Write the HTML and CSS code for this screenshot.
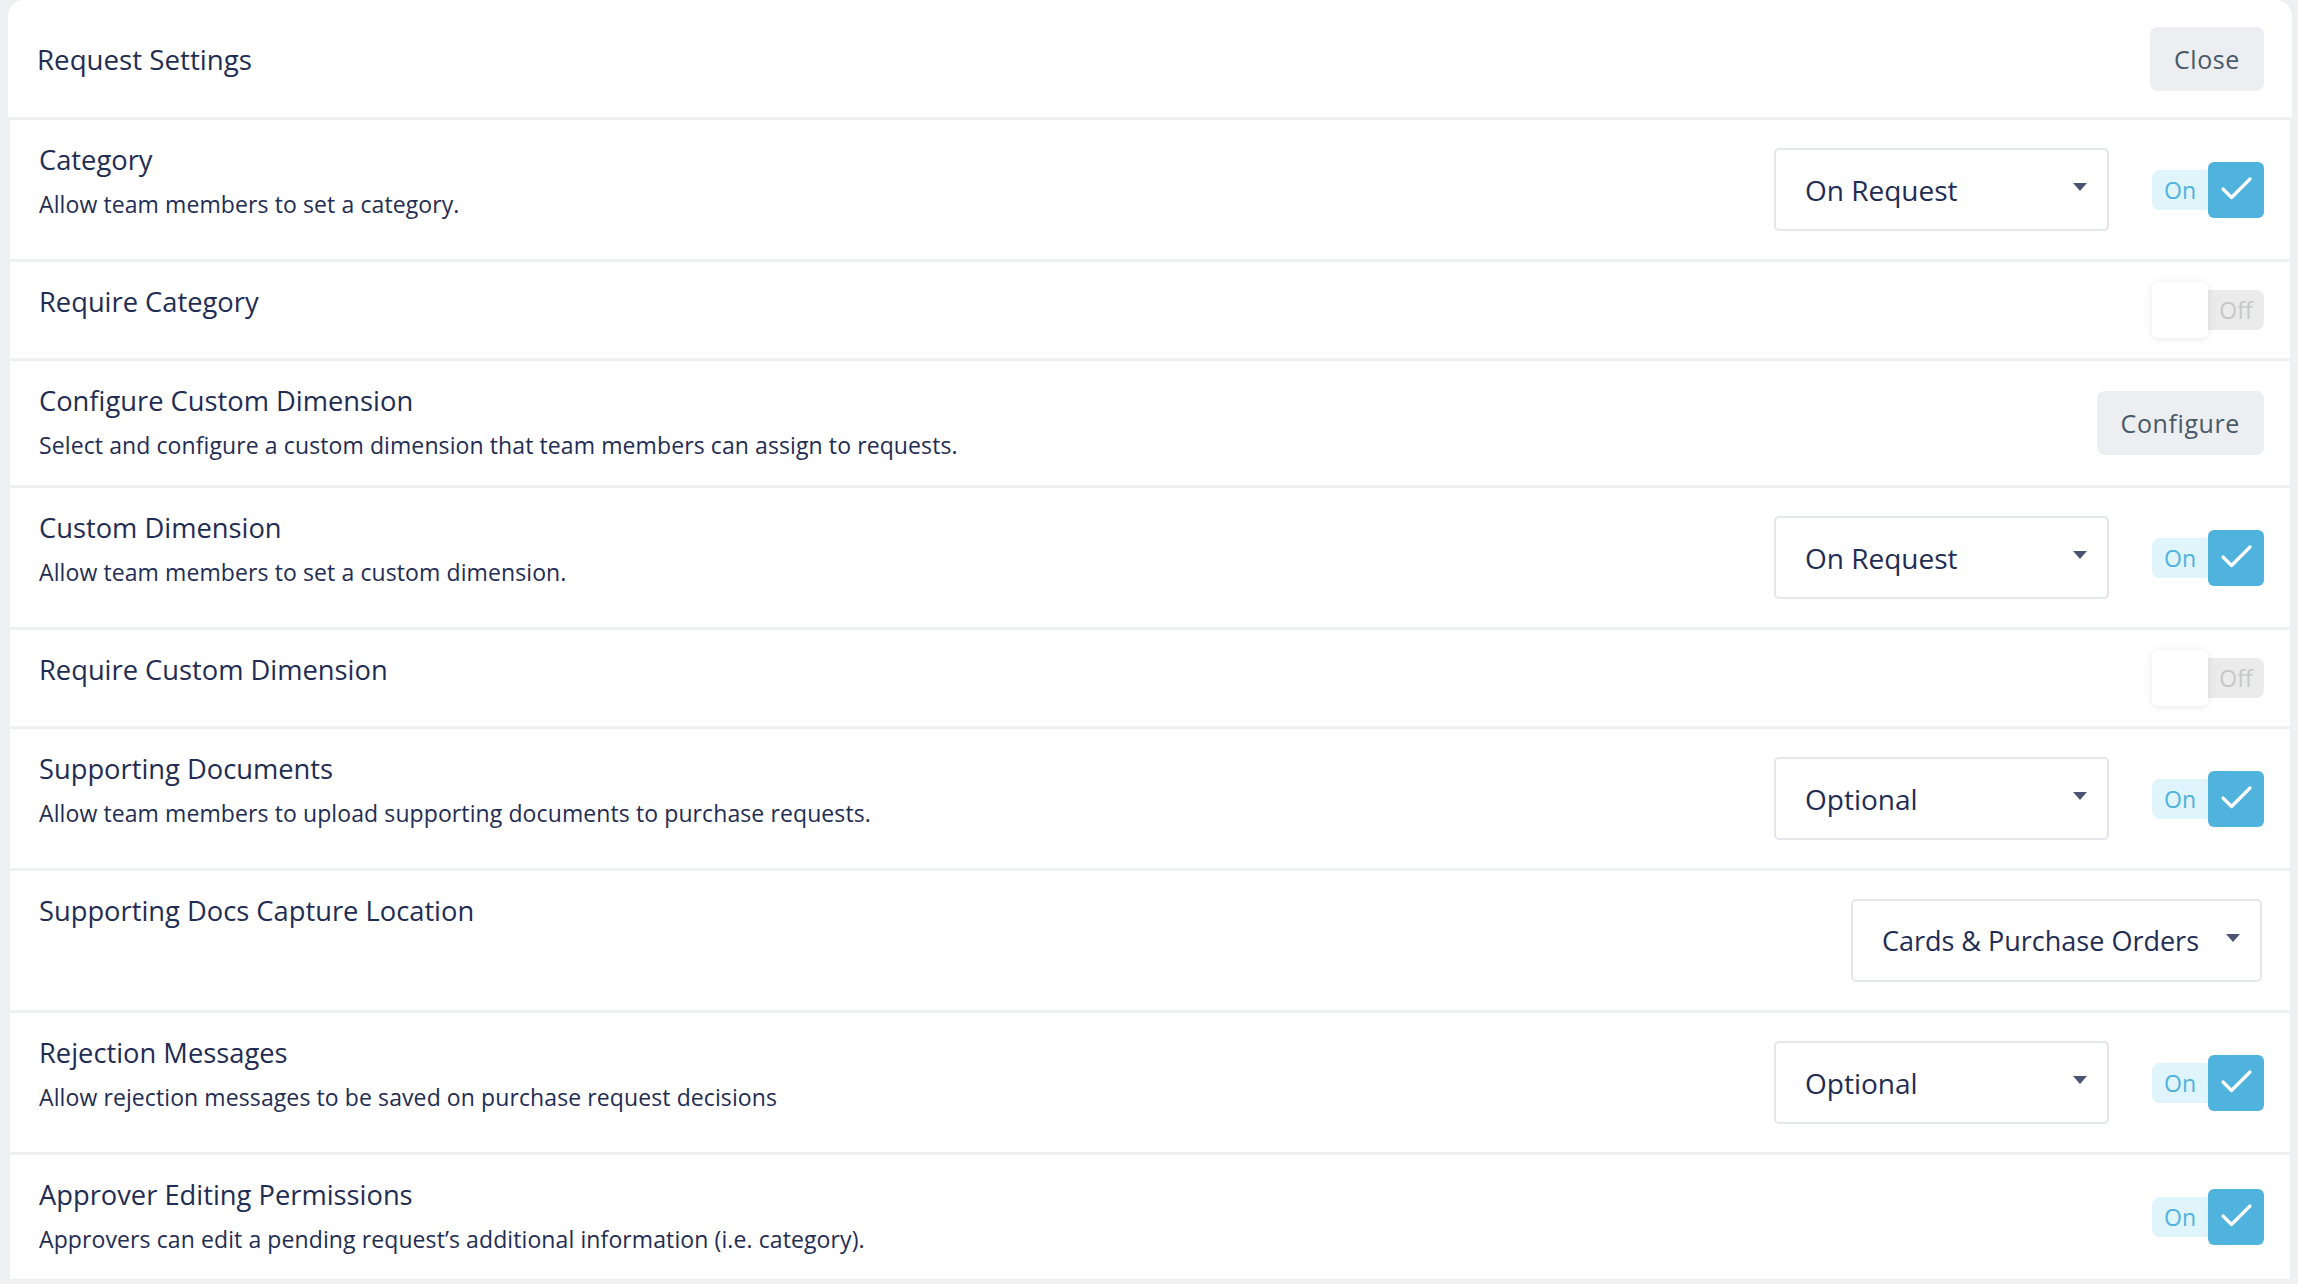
FILE: index.html
```html
<!DOCTYPE html>
<html lang="en">
<head>
    <meta charset="UTF-8">
    <meta name="viewport" content="width=device-width, initial-scale=1.0">
    <title>Request Settings</title>
    <link rel="stylesheet" href="styles.css">
</head>
<body>

    <div class="panel">
        <header class="panel-header">
            <h1>Request Settings</h1>
            <button class="btn">Close</button>
        </header>

        <div class="settings">
            <div class="row">
                <div class="row-text">
                    <div class="row-title">Category</div>
                    <div class="row-desc">Allow team members to set a category.</div>
                </div>
                <div class="row-controls">
                    <div class="select"><span>On Request</span><span class="select-arrow"></span></div>
                    <div class="toggle on">
                        <div class="toggle-track"><span class="toggle-label">On</span></div>
                        <span class="toggle-knob">
                            <svg width="56" height="56" viewBox="0 0 56 56"><polyline points="15,27 23.5,35.5 42,17" /></svg>
                        </span>
                    </div>
                </div>
            </div>

            <div class="row">
                <div class="row-text">
                    <div class="row-title">Require Category</div>
                </div>
                <div class="row-controls">
                    <div class="toggle off">
                        <div class="toggle-track"><span class="toggle-label">Off</span></div>
                        <span class="toggle-knob"></span>
                    </div>
                </div>
            </div>

            <div class="row">
                <div class="row-text">
                    <div class="row-title">Configure Custom Dimension</div>
                    <div class="row-desc">Select and configure a custom dimension that team members can assign to requests.</div>
                </div>
                <div class="row-controls">
                    <button class="btn">Configure</button>
                </div>
            </div>

            <div class="row">
                <div class="row-text">
                    <div class="row-title">Custom Dimension</div>
                    <div class="row-desc">Allow team members to set a custom dimension.</div>
                </div>
                <div class="row-controls">
                    <div class="select"><span>On Request</span><span class="select-arrow"></span></div>
                    <div class="toggle on">
                        <div class="toggle-track"><span class="toggle-label">On</span></div>
                        <span class="toggle-knob">
                            <svg width="56" height="56" viewBox="0 0 56 56"><polyline points="15,27 23.5,35.5 42,17" /></svg>
                        </span>
                    </div>
                </div>
            </div>

            <div class="row">
                <div class="row-text">
                    <div class="row-title">Require Custom Dimension</div>
                </div>
                <div class="row-controls">
                    <div class="toggle off">
                        <div class="toggle-track"><span class="toggle-label">Off</span></div>
                        <span class="toggle-knob"></span>
                    </div>
                </div>
            </div>

            <div class="row">
                <div class="row-text">
                    <div class="row-title">Supporting Documents</div>
                    <div class="row-desc">Allow team members to upload supporting documents to purchase requests.</div>
                </div>
                <div class="row-controls">
                    <div class="select"><span>Optional</span><span class="select-arrow"></span></div>
                    <div class="toggle on">
                        <div class="toggle-track"><span class="toggle-label">On</span></div>
                        <span class="toggle-knob">
                            <svg width="56" height="56" viewBox="0 0 56 56"><polyline points="15,27 23.5,35.5 42,17" /></svg>
                        </span>
                    </div>
                </div>
            </div>

            <div class="row">
                <div class="row-text">
                    <div class="row-title">Supporting Docs Capture Location</div>
                </div>
                <div class="row-controls">
                    <div class="select select-wide"><span>Cards &amp; Purchase Orders</span><span class="select-arrow"></span></div>
                </div>
            </div>

            <div class="row">
                <div class="row-text">
                    <div class="row-title">Rejection Messages</div>
                    <div class="row-desc">Allow rejection messages to be saved on purchase request decisions</div>
                </div>
                <div class="row-controls">
                    <div class="select"><span>Optional</span><span class="select-arrow"></span></div>
                    <div class="toggle on">
                        <div class="toggle-track"><span class="toggle-label">On</span></div>
                        <span class="toggle-knob">
                            <svg width="56" height="56" viewBox="0 0 56 56"><polyline points="15,27 23.5,35.5 42,17" /></svg>
                        </span>
                    </div>
                </div>
            </div>

            <div class="row">
                <div class="row-text">
                    <div class="row-title">Approver Editing Permissions</div>
                    <div class="row-desc">Approvers can edit a pending request’s additional information (i.e. category).</div>
                </div>
                <div class="row-controls">
                    <div class="toggle on">
                        <div class="toggle-track"><span class="toggle-label">On</span></div>
                        <span class="toggle-knob">
                            <svg width="56" height="56" viewBox="0 0 56 56"><polyline points="15,27 23.5,35.5 42,17" /></svg>
                        </span>
                    </div>
                </div>
            </div>
        </div>
    </div>

</body>
</html>
```

FILE: styles.css
```css
body {
    margin: 0;
    background-color: #eff0f2;
    font-family: "Open Sans", "Noto Sans", sans-serif;
    color: #1f2d54;
}

.panel {
    margin: 0 6px 0 8px;
}

.panel-header {
    height: 117px;
    display: flex;
    align-items: center;
    justify-content: space-between;
    padding: 0 28px 0 29px;
    background-color: #fff;
    border-radius: 16px 16px 0 0;
}

.panel-header h1 {
    margin: 0;
    font-size: 27.7px;
    font-weight: 400;
}

.btn {
    height: 64px;
    padding: 0 24px;
    background-color: #eceef1;
    color: #485968;
    border: none;
    border-radius: 8px;
    font-family: inherit;
    font-size: 25px;
    letter-spacing: 0.6px;
    cursor: pointer;
}

.settings {
    display: flex;
    flex-direction: column;
    gap: 3px;
    padding: 3px 2px 0;
}

.row {
    display: flex;
    justify-content: space-between;
    align-items: center;
    padding: 0 26px 0 29px;
    background-color: #fff;
}

.row-text {
    align-self: flex-start;
    padding: 22px 0;
}

.row-title {
    font-size: 27.3px;
    line-height: 36px;
}

.row-desc {
    margin-top: 8px;
    font-size: 23px;
    line-height: 36px;
    letter-spacing: 0.1px;
}

.row-controls {
    display: flex;
    align-items: center;
    gap: 43px;
    padding: 20px 0;
}

.select {
    box-sizing: border-box;
    min-width: 335px;
    height: 83px;
    margin: 8px 0;
    display: flex;
    align-items: center;
    justify-content: space-between;
    gap: 27px;
    padding: 0 20px 0 29px;
    border: 2px solid #e3e7eb;
    border-radius: 5px;
    font-size: 28px;
}

.select-wide {
    margin-right: 2px;
    font-size: 27px;
}

.select-arrow {
    width: 0;
    height: 0;
    margin-bottom: 6px;
    border-left: 7px solid transparent;
    border-right: 7px solid transparent;
    border-top: 8px solid #4b5572;
}

.toggle {
    position: relative;
    width: 112px;
    height: 56px;
    display: flex;
    align-items: center;
}

.toggle-track {
    width: 100%;
    height: 40px;
    display: flex;
    align-items: center;
    border-radius: 8px;
}

.toggle-label {
    width: 56px;
    text-align: center;
    font-size: 23px;
}

.toggle-knob {
    position: absolute;
    top: 0;
    width: 56px;
    height: 56px;
    border-radius: 6px;
}

.toggle.on .toggle-track {
    background-color: #dff4fb;
}

.toggle.on .toggle-label {
    color: #4fb3de;
}

.toggle.on .toggle-knob {
    right: 0;
    background-color: #4fb3de;
}

.toggle-knob svg {
    display: block;
}

.toggle-knob polyline {
    fill: none;
    stroke: #fff;
    stroke-width: 3.2;
    stroke-linecap: round;
    stroke-linejoin: round;
}

.toggle.off .toggle-track {
    background-color: #ebebeb;
}

.toggle.off .toggle-label {
    margin-left: auto;
    color: #c6c6c6;
}

.toggle.off .toggle-knob {
    left: 0;
    background-color: #fff;
    box-shadow: 0 1px 8px rgba(0, 0, 0, 0.09);
}
```
